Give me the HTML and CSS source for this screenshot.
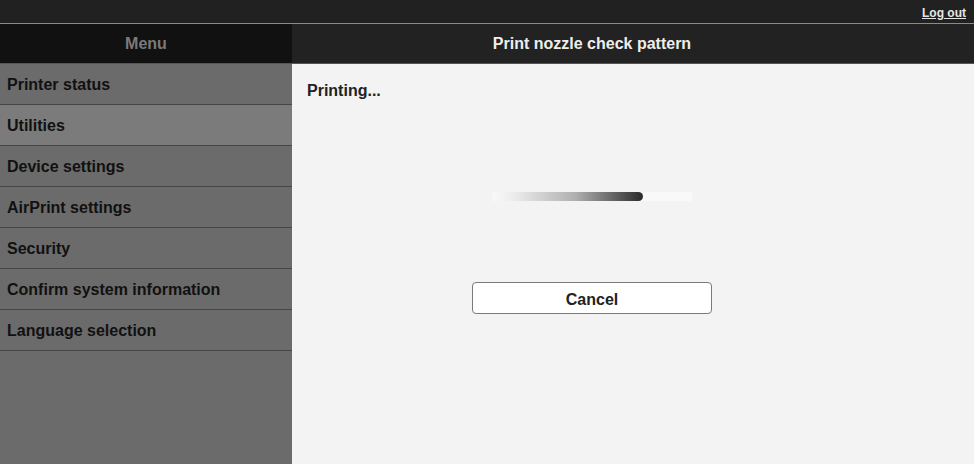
FILE: index.html
```html
<!DOCTYPE html>
<html lang="en">
<head>
    <meta charset="UTF-8">
    <meta name="viewport" content="width=device-width, initial-scale=1.0">
    <title>Print nozzle check pattern</title>
    <link rel="stylesheet" href="styles.css">
</head>
<body>
    <!-- Top bar -->
    <div class="topbar">
        <a class="logout" href="#">Log out</a>
    </div>

    <div class="layout">
        <!-- Side menu -->
        <div class="sidebar">
            <div class="menu-title">Menu</div>
            <ul class="menu">
                <li>Printer status</li>
                <li class="active">Utilities</li>
                <li>Device settings</li>
                <li>AirPrint settings</li>
                <li>Security</li>
                <li>Confirm system information</li>
                <li>Language selection</li>
            </ul>
        </div>

        <!-- Content -->
        <div class="content">
            <div class="page-title">Print nozzle check pattern</div>
            <div class="panel">
                <p class="status">Printing...</p>
                <div class="progress">
                    <div class="progress-fill"></div>
                </div>
                <button class="btn-cancel">Cancel</button>
            </div>
        </div>
    </div>
</body>
</html>
```

FILE: styles.css
```css
* {
    margin: 0;
    padding: 0;
    box-sizing: border-box;
}

body {
    width: 974px;
    height: 464px;
    overflow: hidden;
    font-family: "Liberation Sans", Arial, sans-serif;
    font-weight: bold;
    background: #f3f3f3;
}

/* Barra superiore */
.topbar {
    height: 24px;
    background: #212121;
    border-bottom: 1px solid #8a8a8a;
    display: flex;
    justify-content: flex-end;
    align-items: center;
    padding-right: 8px;
}

.logout {
    color: #e6e6e6;
    font-size: 12px;
    text-decoration: underline;
    padding-top: 2px;
}

.layout {
    display: flex;
    height: 440px;
}

/* Menu laterale */
.sidebar {
    width: 292px;
    background: #6b6b6b;
    display: flex;
    flex-direction: column;
}

.menu-title {
    height: 40px;
    background: #111;
    color: #7a7a7a;
    font-size: 16px;
    display: flex;
    align-items: center;
    justify-content: center;
    border-bottom: 1px solid #555;
}

.menu {
    list-style: none;
}

.menu li {
    height: 41px;
    padding: 12px 7px 0;
    font-size: 16px;
    color: #111;
    border-bottom: 1px solid #464646;
}

.menu li.active {
    background: #7b7b7b;
}

/* Contenuto */
.content {
    flex: 1;
    display: flex;
    flex-direction: column;
}

.page-title {
    height: 40px;
    background: #222;
    color: #eee;
    font-size: 16px;
    display: flex;
    align-items: center;
    justify-content: center;
    padding-right: 82px;
    border-bottom: 1px solid #555;
}

.panel {
    flex: 1;
    background: #f3f3f3;
    display: flex;
    flex-direction: column;
    align-items: center;
    padding-top: 18px;
    padding-right: 82px;
}

.status {
    align-self: flex-start;
    margin-left: 15px;
    font-size: 16px;
    color: #222;
}

.progress {
    width: 200px;
    height: 9px;
    margin-top: 92px;
    background: #f9f9f9;
    border-radius: 2px;
}

.progress-fill {
    width: 151px;
    height: 100%;
    border-radius: 0 5px 5px 0;
    background: linear-gradient(to right, rgba(240, 240, 240, 0) 0%, rgba(235, 235, 235, 1) 15%, #b0b0b0 55%, #2a2a2a 100%);
}

.btn-cancel {
    width: 240px;
    height: 32px;
    margin-top: 81px;
    padding-top: 3px;
    background: #fff;
    border: 1px solid #7a7a7a;
    border-radius: 4px;
    font-family: "Liberation Sans", Arial, sans-serif;
    font-weight: bold;
    font-size: 16px;
    color: #222;
}
```
